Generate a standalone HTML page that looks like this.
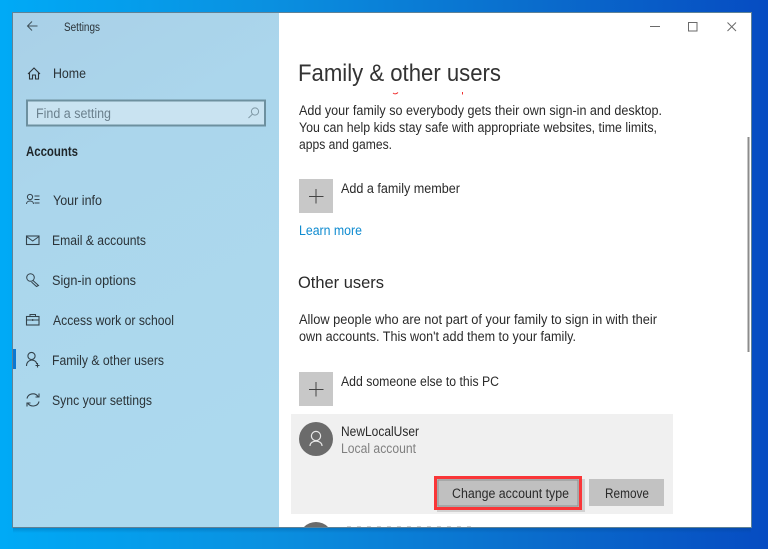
<!DOCTYPE html>
<html><head><meta charset="utf-8"><title>Settings</title>
<style>
html,body{margin:0;padding:0;width:768px;height:549px;overflow:hidden;background:#0a7fd8}
svg{display:block}
text{font-family:"Liberation Sans",sans-serif;font-size:13.5px;fill:#2b3338}
.m text{fill:#2a2a2a}
.b{filter:blur(.35px)}
</style></head><body>
<svg width="768" height="549" viewBox="0 0 768 549" xmlns="http://www.w3.org/2000/svg">
<defs>
<linearGradient id="bg" gradientUnits="userSpaceOnUse" x1="0" y1="0" x2="768" y2="0">
<stop offset="0" stop-color="#00aaf6"/><stop offset=".35" stop-color="#0a90e0"/><stop offset=".7" stop-color="#0a6ccc"/><stop offset="1" stop-color="#064cc2"/>
</linearGradient>
<linearGradient id="side" x1="0" y1="0" x2="0.3" y2="1">
<stop offset="0" stop-color="#a9d0e7"/><stop offset=".35" stop-color="#abd6ec"/><stop offset="1" stop-color="#acd9ee"/>
</linearGradient>
<linearGradient id="sh" x1="0" y1="0" x2="0" y2="1">
<stop offset="0" stop-color="#003a70" stop-opacity=".3"/><stop offset="1" stop-color="#003a70" stop-opacity="0"/>
</linearGradient>
<clipPath id="win"><rect x="13" y="13" width="738" height="514"/></clipPath>
</defs>
<rect width="768" height="549" fill="url(#bg)"/>
<rect x="13" y="527" width="738" height="6" fill="url(#sh)"/>
<rect x="12.500" y="12.500" width="739" height="515" fill="#fff" stroke="#5f8296"/>
<rect x="13" y="13" width="266" height="514" fill="url(#side)"/>

<g class="b">
<!-- sidebar header -->
<path d="M37.500 26H28M32 21.500L27.500 26L32 30.500" fill="none" stroke="#40525c" stroke-width="1"/>
<text x="64" y="31" style="font-size:11.500px" textLength="36" lengthAdjust="spacingAndGlyphs">Settings</text>
<path d="M28 74L34 68L40 74M29.500 72.500V79H32.500V75H35.500V79H38.500V72.500" fill="none" stroke="#2b3338" stroke-width="1.100"/>
<text x="53" y="78" textLength="33" lengthAdjust="spacingAndGlyphs">Home</text>

<rect x="27" y="100.500" width="238" height="25" fill="#c9e3f1" stroke="#6d909f" stroke-width="2"/>
<text x="36" y="118" style="fill:#6b818e" textLength="75" lengthAdjust="spacingAndGlyphs">Find a setting</text>
<circle cx="255" cy="111.500" r="3.600" fill="none" stroke="#7f98a5"/>
<path d="M252.400 114.200L248.500 118" stroke="#7f98a5" fill="none"/>
<text x="26" y="156" style="fill:#1f262a;font-weight:bold" textLength="52" lengthAdjust="spacingAndGlyphs">Accounts</text>

<!-- nav icons -->
<g fill="none" stroke="#34434c" stroke-width="1">
<circle cx="30" cy="197" r="2.600"/><path d="M26.500 204C26.500 200 33.500 200 33.500 204M34.500 196H39.500M34.500 199.500H39.500M34.500 203H39.500"/>
<rect x="26.500" y="236" width="12.500" height="8.500" stroke-width="1.100"/><path d="M26.500 236.500L32.700 241L39 236.500"/>
<circle cx="30.500" cy="277.500" r="3.800"/><path d="M33 280.500L38.500 285.500L36.500 286.500L31.500 282"/>
<rect x="26.500" y="316.500" width="12.500" height="8.500" stroke-width="1.100"/><path d="M30 316.500V314.500H35.500V316.500M26.500 320H39M32.700 319V321"/>
<circle cx="31.500" cy="356" r="3.600" stroke-width="1.100"/><path d="M26.500 366C26.500 358.500 36 358.500 36.800 364M37.500 363V367.500M35.500 365.500H39.500" stroke-width="1.100"/>
<path d="M27 398.500C28 393.500 35 392 38 396.500M39 393.500V397H35.500M39 401.500C38 406.500 31 407.500 28 403.500M27 406.500V403H30.500" stroke-width="1.100"/>
</g>
<text x="53" y="205" textLength="49" lengthAdjust="spacingAndGlyphs">Your info</text>
<text x="52" y="245" textLength="94" lengthAdjust="spacingAndGlyphs">Email &amp; accounts</text>
<text x="52" y="285" textLength="84" lengthAdjust="spacingAndGlyphs">Sign-in options</text>
<text x="53" y="325" textLength="121" lengthAdjust="spacingAndGlyphs">Access work or school</text>
<text x="52" y="365" textLength="112" lengthAdjust="spacingAndGlyphs">Family &amp; other users</text>
<text x="52" y="405" textLength="100" lengthAdjust="spacingAndGlyphs">Sync your settings</text>
<rect x="13" y="349" width="3" height="20" fill="#0b78d2"/>

<!-- window controls -->
<path d="M650 26.500H660M688.500 22.500H697V31H688.500ZM727.500 22.500L736 31M736 22.500L727.500 31" fill="none" stroke="#6a6a6a"/>
<rect x="747.500" y="137" width="2" height="215" fill="#8c8c8c"/>

<g class="m" clip-path="url(#win)">
<text x="298" y="81" style="font-size:24px;fill:#333" textLength="203" lengthAdjust="spacingAndGlyphs">Family &amp; other users</text>
<path d="M393 93Q395.500 95 398 92.500M462.500 92V94.500" stroke="#f03030" fill="none"/>
<text x="299" y="115" textLength="363" lengthAdjust="spacingAndGlyphs">Add your family so everybody gets their own sign-in and desktop.</text>
<text x="299" y="132" textLength="358" lengthAdjust="spacingAndGlyphs">You can help kids stay safe with appropriate websites, time limits,</text>
<text x="299" y="149" textLength="93" lengthAdjust="spacingAndGlyphs">apps and games.</text>
<rect x="299" y="179" width="34" height="34" fill="#c8c8c8"/>
<path d="M316 189V203.500M309 196.500H323.500" stroke="#444" fill="none"/>
<text x="341" y="193" textLength="119" lengthAdjust="spacingAndGlyphs">Add a family member</text>
<text x="299" y="235" style="fill:#0f8bd0" textLength="63" lengthAdjust="spacingAndGlyphs">Learn more</text>
<text x="298" y="288" style="font-size:16.500px" textLength="86" lengthAdjust="spacingAndGlyphs">Other users</text>
<text x="299" y="324" textLength="358" lengthAdjust="spacingAndGlyphs">Allow people who are not part of your family to sign in with their</text>
<text x="299" y="341" textLength="277" lengthAdjust="spacingAndGlyphs">own accounts. This won't add them to your family.</text>
<rect x="299" y="372" width="34" height="34" fill="#c8c8c8"/>
<path d="M316 382V396.500M309 389.500H323.500" stroke="#444" fill="none"/>
<text x="341" y="386" textLength="158" lengthAdjust="spacingAndGlyphs">Add someone else to this PC</text>

<rect x="291" y="414" width="382" height="100" fill="#f0f0f0"/>
<circle cx="316" cy="439" r="17" fill="#6b6b6b"/>
<circle cx="316" cy="436" r="4.600" fill="none" stroke="#e8e8e8" stroke-width="1.200"/>
<path d="M310 446C310 439.500 322 439.500 322 446" fill="none" stroke="#e8e8e8" stroke-width="1.200"/>
<text x="341" y="436" textLength="78" lengthAdjust="spacingAndGlyphs">NewLocalUser</text>
<text x="341" y="453" style="fill:#808080" textLength="75" lengthAdjust="spacingAndGlyphs">Local account</text>

<rect x="437" y="479" width="148" height="33" fill="#8a8a8a" opacity=".3"/>
<rect x="435.500" y="477.500" width="145" height="31" fill="#c0c0c0" stroke="#f93638" stroke-width="3"/>
<rect x="438" y="480" width="140" height="26" fill="none" stroke="#8d9090" stroke-width="1"/>
<text x="452" y="498" textLength="117" lengthAdjust="spacingAndGlyphs">Change account type</text>
<rect x="589" y="479" width="75" height="27" fill="#c2c2c2"/>
<text x="605" y="498" textLength="44" lengthAdjust="spacingAndGlyphs">Remove</text>
<circle cx="316" cy="539" r="17" fill="#6b6b6b"/>
<path d="M347 526.500H476" stroke="#888" stroke-width="1" stroke-dasharray="4 6" opacity=".4"/>
</g>
</g>
</svg>
</body></html>
